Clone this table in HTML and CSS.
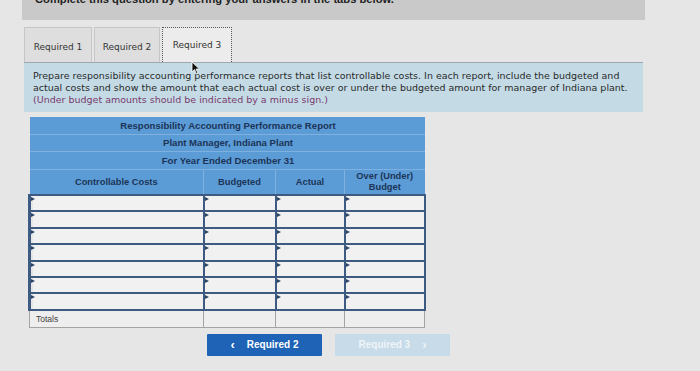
FILE: index.html
```html
<!DOCTYPE html>
<html>
<head>
<meta charset="utf-8">
<link rel="stylesheet" href="styles.css">
</head>
<body>
<div class="banner"><p class="banner-text">Complete this question by entering your answers in the tabs below.</p></div>
<div class="main">
  <div class="tabs">
    <div class="tab tab-1">Required 1</div>
    <div class="tab tab-2">Required 2</div>
    <div class="tab tab-3 active">Required 3</div>
  </div>
  <div class="info">
    <p>Prepare responsibility accounting performance reports that list controllable costs. In each report, include the budgeted and actual costs and show the amount that each actual cost is over or under the budgeted amount for manager of Indiana plant.</p>
    <p class="note">(Under budget amounts should be indicated by a minus sign.)</p>
  </div>
  <table class="report">
    <colgroup>
      <col class="c1"><col class="c2"><col class="c3"><col class="c4">
    </colgroup>
    <tr class="title t1"><th colspan="4">Responsibility Accounting Performance Report</th></tr>
    <tr class="title t2"><th colspan="4">Plant Manager, Indiana Plant</th></tr>
    <tr class="title t3"><th colspan="4">For Year Ended December 31</th></tr>
    <tr class="colhead"><th>Controllable Costs</th><th>Budgeted</th><th>Actual</th><th>Over (Under)<br>Budget</th></tr>
    <tr class="data"><td class="first"><span class="flag"></span></td><td><span class="flag"></span></td><td><span class="flag"></span></td><td><span class="flag"></span></td></tr>
    <tr class="data"><td class="first"><span class="flag"></span></td><td><span class="flag"></span></td><td><span class="flag"></span></td><td><span class="flag"></span></td></tr>
    <tr class="data"><td class="first"><span class="flag"></span></td><td><span class="flag"></span></td><td><span class="flag"></span></td><td><span class="flag"></span></td></tr>
    <tr class="data"><td class="first"><span class="flag"></span></td><td><span class="flag"></span></td><td><span class="flag"></span></td><td><span class="flag"></span></td></tr>
    <tr class="data"><td class="first"><span class="flag"></span></td><td><span class="flag"></span></td><td><span class="flag"></span></td><td><span class="flag"></span></td></tr>
    <tr class="data"><td class="first"><span class="flag"></span></td><td><span class="flag"></span></td><td><span class="flag"></span></td><td><span class="flag"></span></td></tr>
    <tr class="data"><td class="first"><span class="flag"></span></td><td><span class="flag"></span></td><td><span class="flag"></span></td><td><span class="flag"></span></td></tr>
    <tr class="totals"><td class="first">Totals</td><td></td><td></td><td></td></tr>
  </table>
  <div class="nav">
    <div class="btn prev"><span class="chev">&lsaquo;</span>Required 2</div>
    <div class="btn next">Required 3<span class="chev">&rsaquo;</span></div>
  </div>
</div>
<svg class="cursor" width="10" height="14" viewBox="0 0 10 14"><path d="M1 1 L1 11 L3.5 8.5 L5.5 13 L7 12.3 L5 8 L8.5 8 Z" fill="#111" stroke="#fff" stroke-width="0.8"/></svg>
</body>
</html>
```

FILE: styles.css
```css
html, body {
  margin: 0;
  padding: 0;
}
body {
  background: #e6e6e6;
  width: 700px;
  height: 371px;
  overflow: hidden;
  position: relative;
  font-family: "DejaVu Sans", Verdana, sans-serif;
}
.banner {
  margin-left: 22px;
  width: 623px;
  height: 20px;
  background: #c9c9c9;
  overflow: hidden;
}
.banner-text {
  margin: -8px 0 0 13px;
  font-family: "Liberation Sans", Arial, sans-serif;
  font-weight: bold;
  font-size: 11.2px;
  line-height: 14px;
  color: #222;
  white-space: nowrap;
}
.main {
  margin-left: 24px;
  width: 619px;
}
.tabs {
  display: flex;
  gap: 2px;
  margin-top: 7px;
  height: 35px;
}
.tab {
  box-sizing: border-box;
  height: 35px;
  background: #dedede;
  border: 1px solid #c6c6c6;
  border-bottom: none;
  font-size: 9px;
  color: #333;
  display: flex;
  align-items: center;
  justify-content: center;
  padding-top: 3px;
}
.tab-1 { width: 68px; }
.tab-2 { width: 66px; }
.tab-3 { width: 70px; }
.tab.active {
  background: #ececec;
  border: 1px dotted #555;
  border-bottom: none;
  padding-top: 0;
}
.info {
  box-sizing: border-box;
  height: 50px;
  background: #c4dbe6;
  border-top: 1px solid #9ea7ae;
  padding: 7px 9px 0 9px;
  font-size: 9.5px;
  line-height: 12px;
  color: #2a2a2a;
}
.info p {
  margin: 0;
}
.info .note {
  color: #7a3a6c;
}
.report {
  margin: 5px 0 0 4px;
  width: 395px;
  border-collapse: collapse;
  table-layout: fixed;
  font-family: "Liberation Sans", Arial, sans-serif;
}
.c1 { width: 174px; }
.c2 { width: 72px; }
.c3 { width: 69px; }
.c4 { width: 80px; }
.report th {
  background: #5b9bd6;
  color: #1c3557;
  font-weight: bold;
  font-size: 9.3px;
  padding: 0;
  line-height: 10px;
}
.title th {
  border-bottom: 1px solid #7fb0de;
  text-align: center;
  padding-left: 2px;
  font-size: 9.6px;
}
.t1 th { height: 17px; }
.t2 th { height: 16px; }
.t3 th { height: 17px; }
.colhead th {
  height: 24px;
  border-right: 1px solid #7fb0de;
  text-align: center;
  line-height: 11px;
}
.colhead th:last-child { border-right: none; }
.data td {
  height: 14.4px;
  background: #f1f1f1;
  border: 2px solid #3d5b82;
  padding: 0;
  position: relative;
  vertical-align: top;
}
.data td.first {
  border-left-width: 3px;
  box-shadow: inset 2px 0 0 #e6e6e6;
}
.flag {
  display: block;
  width: 0;
  height: 0;
  border-top: 2px solid transparent;
  border-bottom: 2px solid transparent;
  border-left: 4px solid #2b4466;
  margin-top: 1px;
}
.totals td {
  height: 16px;
  background: #eeeeee;
  border: 1px solid #a3a3a3;
  border-top: 2px solid #3d5b82;
  font-size: 8.5px;
  color: #444;
  padding: 0 0 0 4px;
}
.totals td.first {
  border-left: 1px solid #a3a3a3;
  padding-left: 6px;
}
.nav {
  display: flex;
  gap: 13px;
  margin: 6px 0 0 183px;
}
.btn {
  box-sizing: border-box;
  width: 115px;
  height: 22px;
  display: flex;
  align-items: center;
  justify-content: center;
  font-family: "Liberation Sans", Arial, sans-serif;
  font-weight: bold;
  font-size: 10px;
  border-radius: 1px;
}
.prev {
  background: #1e63b5;
  color: #fff;
}
.prev .chev {
  margin-right: 12px;
  font-size: 13px;
  line-height: 10px;
}
.next {
  background: #c8dbe8;
  color: #eef4f8;
}
.next .chev {
  margin-left: 12px;
  font-size: 13px;
  line-height: 10px;
}
.cursor {
  position: absolute;
  left: 191px;
  top: 61px;
}
```
